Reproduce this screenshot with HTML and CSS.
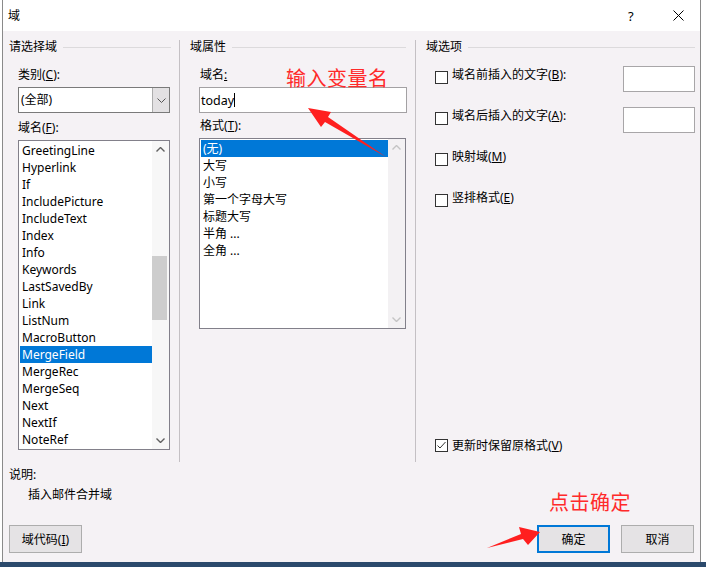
FILE: index.html
```html
<!DOCTYPE html>
<html lang="zh-CN">
<head>
<meta charset="UTF-8">
<meta name="viewport" content="width=device-width, initial-scale=1.0">
<title>域</title>
<link rel="stylesheet" href="styles.css">
</head>
<body>
  <div class="screen">
    <div class="dialog">
      <div class="titlebar">
        <span class="title">域</span>
        <span class="help">?</span>
        <span class="close">
          <svg width="11" height="11" viewBox="0 0 11 11"><path d="M0.5 0.5 L10.5 10.5 M10.5 0.5 L0.5 10.5" stroke="#000" stroke-width="1" fill="none"/></svg>
        </span>
      </div>

      <div class="body">
        <div class="panes">
          <!-- left: pick a field -->
          <section class="pane pane-pick">
            <div class="group-title"><span>请选择域</span></div>
            <div class="field-label label-first">类别(<u>C</u>):</div>
            <div class="combo">
              <span class="combo-text">(全部)</span>
              <span class="combo-btn">
                <svg width="9" height="5" viewBox="0 0 9 5"><path d="M0.5 0.5 L4.5 4.5 L8.5 0.5" stroke="#555" stroke-width="1" fill="none"/></svg>
              </span>
            </div>
            <div class="field-label">域名(<u>F</u>):</div>
            <div class="listbox names">
              <ul class="items">
                <li>GreetingLine</li>
                <li>Hyperlink</li>
                <li>If</li>
                <li>IncludePicture</li>
                <li>IncludeText</li>
                <li>Index</li>
                <li>Info</li>
                <li>Keywords</li>
                <li>LastSavedBy</li>
                <li>Link</li>
                <li>ListNum</li>
                <li>MacroButton</li>
                <li class="selected">MergeField</li>
                <li>MergeRec</li>
                <li>MergeSeq</li>
                <li>Next</li>
                <li>NextIf</li>
                <li>NoteRef</li>
              </ul>
              <div class="scrollbar">
                <svg class="arrow" width="9" height="5" viewBox="0 0 9 5"><path d="M0.5 4.5 L4.5 0.5 L8.5 4.5" stroke="#606060" stroke-width="1.4" fill="none"/></svg>
                <div class="track"><div class="thumb"></div></div>
                <svg class="arrow" width="9" height="5" viewBox="0 0 9 5"><path d="M0.5 0.5 L4.5 4.5 L8.5 0.5" stroke="#606060" stroke-width="1.4" fill="none"/></svg>
              </div>
            </div>
          </section>

          <div class="divider"></div>

          <!-- middle: field properties -->
          <section class="pane pane-props">
            <div class="group-title"><span>域属性</span></div>
            <div class="field-label label-first">域名<u>:</u></div>
            <div class="textbox"><span>today</span><span class="caret"></span></div>
            <div class="field-label label-format">格式(<u>T</u>):</div>
            <div class="listbox formats">
              <ul class="items">
                <li class="selected">(无)</li>
                <li>大写</li>
                <li>小写</li>
                <li>第一个字母大写</li>
                <li>标题大写</li>
                <li>半角 ...</li>
                <li>全角 ...</li>
              </ul>
              <div class="scrollbar disabled">
                <svg class="arrow" width="9" height="5" viewBox="0 0 9 5"><path d="M0.5 4.5 L4.5 0.5 L8.5 4.5" stroke="#c4c4c4" stroke-width="1.4" fill="none"/></svg>
                <div class="track"></div>
                <svg class="arrow" width="9" height="5" viewBox="0 0 9 5"><path d="M0.5 0.5 L4.5 4.5 L8.5 0.5" stroke="#c4c4c4" stroke-width="1.4" fill="none"/></svg>
              </div>
            </div>
          </section>

          <div class="divider"></div>

          <!-- right: field options -->
          <section class="pane pane-options">
            <div class="group-title"><span>域选项</span></div>
            <div class="option-row option-first">
              <span class="checkbox"></span>
              <span class="option-label">域名前插入的文字(<u>B</u>):</span>
              <span class="small-input"></span>
            </div>
            <div class="option-row">
              <span class="checkbox"></span>
              <span class="option-label">域名后插入的文字(<u>A</u>):</span>
              <span class="small-input"></span>
            </div>
            <div class="option-row">
              <span class="checkbox"></span>
              <span class="option-label">映射域(<u>M</u>)</span>
            </div>
            <div class="option-row">
              <span class="checkbox"></span>
              <span class="option-label">竖排格式(<u>E</u>)</span>
            </div>
            <div class="option-row keep-format">
              <span class="checkbox checked">
                <svg width="11" height="11" viewBox="0 0 11 11"><path d="M1.5 5.5 L4 8 L9.5 2" stroke="#333" stroke-width="1" fill="none"/></svg>
              </span>
              <span class="option-label">更新时保留原格式(<u>V</u>)</span>
            </div>
          </section>
        </div>

        <div class="desc">
          <div class="desc-title">说明:</div>
          <div class="desc-text">插入邮件合并域</div>
        </div>

        <div class="buttons">
          <button class="btn">域代码(<u>I</u>)</button>
          <span class="spacer"></span>
          <button class="btn btn-default">确定</button>
          <button class="btn">取消</button>
        </div>
      </div>
    </div>
    <div class="taskbar"></div>

    <!-- red annotations drawn on top of the screenshot -->
    <svg class="marks" width="706" height="567" viewBox="0 0 706 567">
      <polygon fill="#ff1f1f" points="308,108 331,112 328,117 386,157 325,122 321,127"/>
      <polygon fill="#ff1f1f" points="540,532 528,545 523,539 487,548 521,534 519,527"/>
    </svg>
    <div class="note note-name">输入变量名</div>
    <div class="note note-ok">点击确定</div>
  </div>
</body>
</html>
```

FILE: styles.css
```css
body {
  margin: 0;
  padding: 0;
  background-color: #ffffff;
  font-family: "Noto Sans", "Noto Sans CJK SC", sans-serif;
  font-size: 12px;
  color: #000000;
}

.screen {
  position: relative;
  width: 706px;
  height: 567px;
  overflow: hidden;
}

.dialog {
  margin-left: 2px;
  width: 697px;
  height: 562px;
  border-left: 1px solid #8a8a8a;
  border-right: 1px solid #8a8a8a;
  background-color: #f5f2f5;
  display: flex;
  flex-direction: column;
}

.taskbar {
  height: 5px;
  background-color: #2b4a6c;
}

/* title bar */
.titlebar {
  height: 31px;
  background-color: #ffffff;
  display: flex;
  align-items: center;
  padding-left: 5px;
}

.title {
  flex: 1;
  line-height: 14px;
}

.help {
  width: 12px;
  margin-right: 33px;
  font-size: 13px;
}

.close {
  display: flex;
  margin-right: 16px;
}

/* body */
.body {
  flex: 1;
  display: flex;
  flex-direction: column;
}

.panes {
  height: 422px;
  padding-top: 9px;
  padding-left: 6px;
  display: flex;
}

.pane {
  display: flex;
  flex-direction: column;
}

.pane-pick {
  width: 162px;
}

.pane-props {
  width: 216px;
  margin-left: 10px;
}

.pane-options {
  width: 269px;
  margin-left: 10px;
}

.divider {
  width: 1px;
  margin-left: 8px;
  background-color: #c4c0c4;
}

.pane-props + .divider {
  margin-left: 9px;
}

.group-title {
  display: flex;
  align-items: center;
  height: 14px;
  line-height: 14px;
}

.group-title::after {
  content: "";
  flex: 1;
  height: 1px;
  margin-left: 6px;
  background-color: #dcdadc;
}

.field-label {
  height: 14px;
  line-height: 14px;
  margin-top: 8px;
  padding-left: 9px;
}

.label-first {
  margin-top: 14px;
}

.pane-props .field-label {
  padding-left: 10px;
}

.label-format {
  margin-top: 6px;
}

/* combo box */
.combo {
  margin: 5px 0 0 9px;
  width: 150px;
  height: 24px;
  border: 1px solid #7a7a7a;
  background-color: #ffffff;
  display: flex;
}

.combo-text {
  flex: 1;
  line-height: 24px;
  padding-left: 2px;
}

.combo-btn {
  width: 16px;
  background-color: #e3e1e3;
  border-left: 1px solid #adadad;
  display: flex;
  align-items: center;
  justify-content: center;
}

/* list boxes */
.listbox {
  margin: 5px 0 0 9px;
  border: 1px solid #82808a;
  background-color: #ffffff;
  display: flex;
  overflow: hidden;
}

.names {
  width: 150px;
  height: 308px;
}

.formats {
  width: 205px;
  height: 189px;
  margin-top: 5px;
}

.items {
  list-style: none;
  margin: 0;
  padding: 1px 0 0 1px;
  flex: 1;
}

.items li {
  height: 17px;
  line-height: 17px;
  padding-left: 2px;
  white-space: nowrap;
}

.items li.selected {
  background-color: #0078d7;
  color: #ffffff;
}

.scrollbar {
  width: 17px;
  display: flex;
  flex-direction: column;
  align-items: center;
  background-color: #f7f7f7;
}

.scrollbar.disabled {
  background-color: #f3f1f3;
}

.scrollbar .arrow {
  margin: 6px 0;
}

.track {
  flex: 1;
  width: 100%;
  position: relative;
}

.thumb {
  position: absolute;
  left: 0;
  right: 2px;
  top: 98px;
  height: 64px;
  background-color: #cdcdcd;
}

/* text box */
.textbox {
  margin: 5px 0 0 9px;
  width: 205px;
  height: 24px;
  border: 1px solid #a3a1a3;
  background-color: #ffffff;
  display: flex;
  align-items: center;
  padding-left: 1px;
  font-size: 12.5px;
}

.caret {
  width: 1px;
  height: 14px;
  background-color: #000000;
}

/* options */
.option-row {
  display: flex;
  align-items: flex-start;
  height: 41px;
  padding-left: 9px;
}

.option-first {
  margin-top: 12px;
}

.checkbox {
  width: 11px;
  height: 11px;
  margin-top: 5px;
  border: 1px solid #333333;
  background-color: #ffffff;
  display: flex;
}

.option-label {
  flex: 1;
  margin-left: 4px;
  line-height: 18px;
}

.small-input {
  width: 70px;
  height: 24px;
  border: 1px solid #a8a6a8;
  background-color: #ffffff;
}

.keep-format {
  margin-top: auto;
  height: auto;
  margin-bottom: 10px;
}

.keep-format .checkbox {
  margin-top: 0;
}

.keep-format .option-label {
  line-height: 13px;
}

/* description + buttons */
.desc {
  padding-left: 6px;
  margin-top: 6px;
}

.desc-title {
  line-height: 14px;
}

.desc-text {
  line-height: 14px;
  margin-top: 6px;
  padding-left: 19px;
}

.buttons {
  display: flex;
  padding: 0 6px 0 6px;
  margin-top: 23px;
}

.spacer {
  flex: 1;
}

.btn {
  width: 73px;
  height: 28px;
  margin-left: 11px;
  padding: 0;
  border: 1px solid #adadad;
  background-color: #e5e3e5;
  font-family: inherit;
  font-size: 12px;
  color: #000000;
}

.btn:first-child {
  margin-left: 0;
}

.btn-default {
  border: 2px solid #0078d7;
}

/* annotations */
.marks {
  position: absolute;
  left: 0;
  top: 0;
  pointer-events: none;
}

.note {
  position: absolute;
  color: #ff2a2a;
  font-family: "Noto Sans CJK SC", sans-serif;
  font-size: 20px;
  line-height: 22px;
  letter-spacing: 0.5px;
}

.note-name {
  left: 286px;
  top: 67px;
}

.note-ok {
  left: 549px;
  top: 491px;
}
```
